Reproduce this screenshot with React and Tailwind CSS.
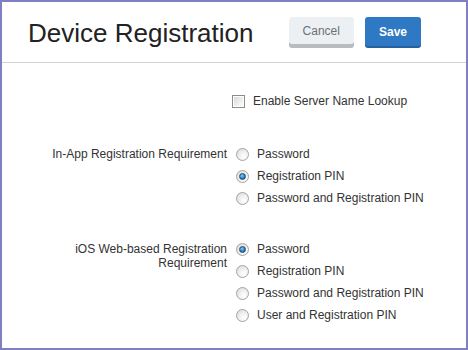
import React from "react";

function Radio({ checked }) {
  return (
    <span className="relative flex h-[13px] w-[13px] shrink-0 items-center justify-center rounded-full border border-[#a3a3a3] bg-[radial-gradient(circle_at_65%_70%,#ffffff_0%,#f2f2f2_40%,#d6d6d6_100%)]">
      {checked && (
        <span className="h-[7px] w-[7px] rounded-full border border-[#2b4a66] bg-[radial-gradient(circle_at_40%_35%,#8fd0ff_0%,#2f8fd6_45%,#0c4e86_100%)]" />
      )}
    </span>
  );
}

function Checkbox() {
  return (
    <span className="flex h-[13px] w-[13px] shrink-0 border border-[#8c8c8c] bg-white p-px">
      <span className="h-full w-full bg-[linear-gradient(135deg,#d8d8d8_0%,#ececec_50%,#fafafa_100%)]" />
    </span>
  );
}

function Option({ checked, label }) {
  return (
    <div className="flex h-[22px] items-center gap-[8px]">
      <Radio checked={checked} />
      <span className="text-[12px] leading-[14px] text-[#333]">{label}</span>
    </div>
  );
}

function Section({ label, options, selected, className = "" }) {
  return (
    <div className={`flex ${className}`}>
      <div className="w-[199px] pt-[4px] pr-[9px] text-right text-[12px] leading-[14px] text-[#333]">
        {label}
      </div>
      <div className="flex flex-col">
        {options.map((o, i) => (
          <Option key={o} label={o} checked={i === selected} />
        ))}
      </div>
    </div>
  );
}

export default function App() {
  return (
    <div
      className="box-border flex h-[350px] w-[468px] flex-col border-2 border-[#8080c0] bg-white"
      style={{ fontFamily: '"Liberation Sans", Arial, sans-serif' }}
    >
      <div className="box-border flex h-[61px] shrink-0 items-center border-b border-[#d2d2d2] pl-[26px] pr-[45px]">
        <h1 className="text-[26px] font-normal leading-[30px] text-[#222] mt-[2px]">Device Registration</h1>
        <div className="ml-auto flex items-start gap-[11px]">
          <button className="mb-[3px] h-[27px] rounded-[3px] bg-[#edf0f2] px-[14px] text-[12px] text-[#6b7076] shadow-[0_4px_0_#b9bcbf]">
            Cancel
          </button>
          <button className="h-[29px] rounded-[3px] bg-[#2f78c4] px-[14px] text-[12px] font-bold text-white shadow-[0_2px_0_#25609f]">
            Save
          </button>
        </div>
      </div>
      <div className="flex flex-col pl-[35px] pt-[27px]">
        <div className="flex h-[22px] items-center">
          <div className="w-[195px]" />
          <div className="flex items-center gap-[8px]">
            <Checkbox />
            <span className="text-[12px] leading-[14px] text-[#333]">Enable Server Name Lookup</span>
          </div>
        </div>
        <Section
          className="mt-[31px]"
          label="In-App Registration Requirement"
          options={["Password", "Registration PIN", "Password and Registration PIN"]}
          selected={1}
        />
        <Section
          className="mt-[29px]"
          label="iOS Web-based Registration Requirement"
          options={[
            "Password",
            "Registration PIN",
            "Password and Registration PIN",
            "User and Registration PIN",
          ]}
          selected={0}
        />
      </div>
    </div>
  );
}
